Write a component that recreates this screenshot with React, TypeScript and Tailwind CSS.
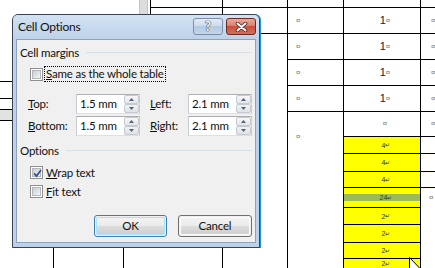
import type { ReactNode } from "react";

// word document behind the dialog

function CellMark({ className = "" }: { className?: string }) {
  return (
    <span
      className={`font-['Liberation_Sans',sans-serif] text-[8px] leading-none text-[#7d7466] ${className}`}
    >
      ¤
    </span>
  );
}

function NumCell() {
  return (
    <div className="flex h-[26px] items-center justify-center border-t border-black pl-[6px]">
      <span className="font-['Liberation_Sans',sans-serif] text-[11px] leading-none text-[#222]">
        1
      </span>
      <CellMark />
    </div>
  );
}

function YellowCell({ h, text }: { h: string; text: string }) {
  return (
    <div
      className={`flex ${h} items-center justify-center border-t border-black bg-[#ffff00] pl-[8px] font-['Liberation_Sans',sans-serif] text-[7px] leading-none text-[#333]`}
    >
      {text}
      <span className="text-[6px]">↵</span>
    </div>
  );
}

function LeftPane() {
  return (
    <div className="flex w-[287px] shrink-0 flex-col">
      <div className="flex h-[7px]">
        <div className="w-[139px]" />
        <div className="w-[9px] border-x border-[#c4c4c4] bg-[#dcdcdc]" />
        <div className="w-[2px]" />
        <div className="w-[72px] border-l border-black" />
        <div className="flex-1 border-l border-black" />
      </div>
      <div className="flex h-[26px]">
        <div className="w-[139px]" />
        <div className="w-[9px] border-x border-[#c4c4c4] bg-[#dcdcdc]" />
        <div className="w-[2px]" />
        <div className="w-[72px] border-l border-t border-black" />
        <div className="flex-1 border-l border-t border-black" />
      </div>
      <div className="flex flex-1">
        <div className="flex w-[150px] flex-col">
          <div className="h-[48px]" />
          <div className="h-[17px] border-t border-black" />
          <div className="h-[11px] border-t border-black" />
          <div className="h-[11px] border-t border-black bg-[#e2e2e2]" />
          <div className="flex-1 border-t border-black" />
        </div>
        <div className="w-[72px] border-l border-t border-black" />
        <div className="flex-1 border-t border-black" />
      </div>
      <div className="flex h-[20px]">
        <div className="w-[53px]" />
        <div className="w-[70px] border-l border-black" />
        <div className="w-[99px] border-l border-black" />
        <div className="flex-1 border-l border-black" />
      </div>
    </div>
  );
}

function RightTable() {
  return (
    <div className="flex flex-1">
      <div className="flex w-[56px] flex-col border-l border-black">
        <div className="h-[7px]" />
        {[0, 1, 2, 3].map((i) => (
          <div key={i} className="flex h-[26px] items-center border-t border-black pl-[8px]">
            <CellMark />
          </div>
        ))}
        <div className="flex-1 border-t border-black pl-[8px] pt-[9px]">
          <CellMark />
        </div>
      </div>
      <div className="flex w-[77px] flex-col border-l border-black">
        <div className="h-[7px]" />
        <NumCell />
        <NumCell />
        <NumCell />
        <NumCell />
        <div className="flex h-[25px] items-center justify-center border-t border-black pl-[6px]">
          <CellMark />
        </div>
        <YellowCell h="h-[17px]" text="4" />
        <YellowCell h="h-[18px]" text="4" />
        <YellowCell h="h-[16px]" text="4" />
        <div className="flex h-[20px] flex-col border-t border-black bg-[#ffff00]">
          <div className="h-[6px]" />
          <div className="flex h-[7px] items-center justify-center bg-[#9bbb59] pl-[8px] font-['Liberation_Sans',sans-serif] text-[7px] leading-none text-[#2c3a2c]">
            24<span className="text-[6px]">↵</span>
          </div>
        </div>
        <YellowCell h="h-[17px]" text="2" />
        <YellowCell h="h-[18px]" text="2" />
        <YellowCell h="h-[16px]" text="2" />
        <YellowCell h="flex-1" text="2" />
      </div>
      <div className="flex flex-1 flex-col border-l border-black">
        <div className="h-[7px]" />
        {[0, 1, 2, 3].map((i) => (
          <div key={i} className="flex h-[26px] items-center border-t border-black pl-[10px]">
            <CellMark />
          </div>
        ))}
        <div className="flex h-[25px] items-center border-t border-black pl-[10px]">
          <CellMark />
        </div>
        <div className="h-[17px] border-t border-black" />
        <div className="h-[18px] border-t border-black" />
        <div className="h-[16px] border-t border-black" />
        <div className="flex h-[20px] items-center border-t border-black pl-[8px]">
          <CellMark />
        </div>
        <div className="flex-1" />
      </div>
    </div>
  );
}

// dialog parts

function CheckBox({ checked = false }: { checked?: boolean }) {
  return (
    <span className="relative flex h-[13px] w-[13px] shrink-0 border border-[#8e8f8f] bg-white p-px">
      <span className="h-full w-full border border-[#b3b8be] bg-[linear-gradient(135deg,#c9cdd3,#f5f5f5)]" />
      {checked && (
        <svg className="absolute left-[1px] top-[1px]" width="11" height="11" viewBox="0 0 11 11">
          <path d="M2 5.5 L4.5 8 L9 2" fill="none" stroke="#3d5690" strokeWidth="1.9" />
        </svg>
      )}
    </span>
  );
}

function GroupHeader({ label }: { label: string }) {
  return (
    <div className="flex h-[16px] items-center gap-[7px] pl-[3px] pr-[3px]">
      <span>{label}</span>
      <span className="h-[2px] flex-1 border-t border-[#d5dfe5] border-b-white" />
    </div>
  );
}

function Arrow({ up }: { up?: boolean }) {
  return (
    <svg width="5" height="3" viewBox="0 0 5 3">
      <polygon points={up ? "0,3 2.5,0 5,3" : "0,0 2.5,3 5,0"} fill="#4e6287" />
    </svg>
  );
}

function SpinField({ value }: { value: string }) {
  return (
    <div className="flex h-[20px] w-[64px] border border-[#abadb3] border-b-[#dbdfe6] border-x-[#c9ccd3] bg-white">
      <span className="flex flex-1 items-center pl-[3px]">{value}</span>
      <div className="flex w-[15px] flex-col">
        <span className="flex flex-1 items-center justify-center rounded-[2px] border border-[#c4cad3] bg-[linear-gradient(#f7f7f7,#e6e6e6)]">
          <Arrow up />
        </span>
        <span className="flex flex-1 items-center justify-center rounded-[2px] border border-[#c4cad3] bg-[linear-gradient(#f2f2f2,#e1e1e1)]">
          <Arrow />
        </span>
      </div>
    </div>
  );
}

function Key({ children }: { children: ReactNode }) {
  return <span className="underline underline-offset-[1px]">{children}</span>;
}

function WinButton({ children, primary = false, w }: { children: ReactNode; primary?: boolean; w: string }) {
  return (
    <div
      className={`flex h-[22px] ${w} rounded-[3px] border p-px ${
        primary ? "border-[#3c7fb1]" : "border-[#707070]"
      }`}
    >
      <div
        className={`flex flex-1 items-center justify-center rounded-[2px] border ${
          primary ? "border-[#a8e3f7]" : "border-[#fbfbfb]"
        } bg-[linear-gradient(#f2f2f2_0%,#ebebeb_50%,#dddddd_50%,#cfcfcf_100%)]`}
      >
        {children}
      </div>
    </div>
  );
}

function Dialog() {
  return (
    <div className="absolute left-[12px] top-[14px] flex h-[234px] w-[248px] flex-col rounded-t-[6px] border border-[#3b4452] bg-[#bcd1ea] font-['Lato','Noto_Sans',sans-serif] text-[11.5px] leading-none tracking-[-0.2px] text-[#111] shadow-[1px_0_0_#1d9bd8]">
      {/* title bar */}
      <div className="flex h-[24px] shrink-0 items-center justify-between rounded-t-[5px] bg-[linear-gradient(#d3e2f3,#bdd2ea)] pl-[5px] pr-[3px]">
        <span className="text-[12px]">Cell Options</span>
        <div className="flex gap-[3px] self-start pt-[3px]">
          <div className="flex h-[17px] w-[30px] items-center justify-center rounded-[3px] border border-[#7a8ea9] bg-[linear-gradient(#e4ecf6_0%,#cbdaeb_50%,#b5c9e1_50%,#c3d5ea_100%)]">
            <span className="text-[13px] font-bold text-white [text-shadow:0_0_1px_#2f3f57,0_0_1px_#2f3f57,0_0_1px_#2f3f57]">
              ?
            </span>
          </div>
          <div className="flex h-[17px] w-[30px] items-center justify-center rounded-[3px] border border-[#6b2a22] bg-[linear-gradient(#e9a99e_0%,#d97d6c_50%,#c8503c_50%,#d0705c_100%)]">
            <svg width="13" height="10" viewBox="0 0 13 10">
              <path d="M2.5 1.5 L10.5 8.5 M10.5 1.5 L2.5 8.5" stroke="#4b2019" strokeWidth="3.6" strokeLinecap="round" />
              <path d="M2.5 1.5 L10.5 8.5 M10.5 1.5 L2.5 8.5" stroke="#ffffff" strokeWidth="2" strokeLinecap="round" />
            </svg>
          </div>
        </div>
      </div>

      {/* client area */}
      <div className="mx-[3px] flex h-[204px] shrink-0 flex-col border border-[#8da2bd] bg-[#f0f0f0] pt-[5px]">
        <GroupHeader label="Cell margins" />

        <div className="mt-[5px] flex h-[16px] items-center gap-[1px] pl-[13px]">
          <CheckBox />
          <span className="flex h-[16px] items-center border border-dotted border-black px-px">
            <Key>S</Key>ame as the whole table
          </span>
        </div>

        <div className="mt-[12px] flex items-center pl-[11px]">
          <span className="w-[48px]">
            <Key>T</Key>op:
          </span>
          <SpinField value="1.5 mm" />
          <span className="ml-[10px] w-[38px]">
            <Key>L</Key>eft:
          </span>
          <SpinField value="2.1 mm" />
        </div>
        <div className="mt-[2px] flex items-center pl-[11px]">
          <span className="w-[48px]">
            <Key>B</Key>ottom:
          </span>
          <SpinField value="1.5 mm" />
          <span className="ml-[10px] w-[38px]">
            <Key>R</Key>ight:
          </span>
          <SpinField value="2.1 mm" />
        </div>

        <div className="mt-[7px]">
          <GroupHeader label="Options" />
        </div>

        <div className="mt-[7px] flex h-[13px] items-center gap-[3px] pl-[13px]">
          <CheckBox checked />
          <span>
            <Key>W</Key>rap text
          </span>
        </div>
        <div className="mt-[6px] flex h-[13px] items-center gap-[3px] pl-[13px]">
          <CheckBox />
          <span>
            <Key>F</Key>it text
          </span>
        </div>

        <div className="mt-[17px] flex justify-end gap-[11px] pr-[3px]">
          <WinButton primary w="w-[73px]">
            OK
          </WinButton>
          <WinButton w="w-[74px]">Cancel</WinButton>
        </div>
      </div>
    </div>
  );
}

function Cursor() {
  return (
    <svg className="absolute left-[409px] top-[257px]" width="12" height="19" viewBox="0 0 12 19">
      <path d="M0.5 0.5 L0.5 16 L4 12.5 L6.5 18 L8.5 17 L6 11.5 L11 11.5 Z" fill="#fff" stroke="#000" strokeWidth="1" />
    </svg>
  );
}

export default function App() {
  return (
    <div className="relative flex h-[268px] w-[435px] overflow-hidden bg-white">
      <LeftPane />
      <RightTable />
      <Dialog />
      <Cursor />
    </div>
  );
}
